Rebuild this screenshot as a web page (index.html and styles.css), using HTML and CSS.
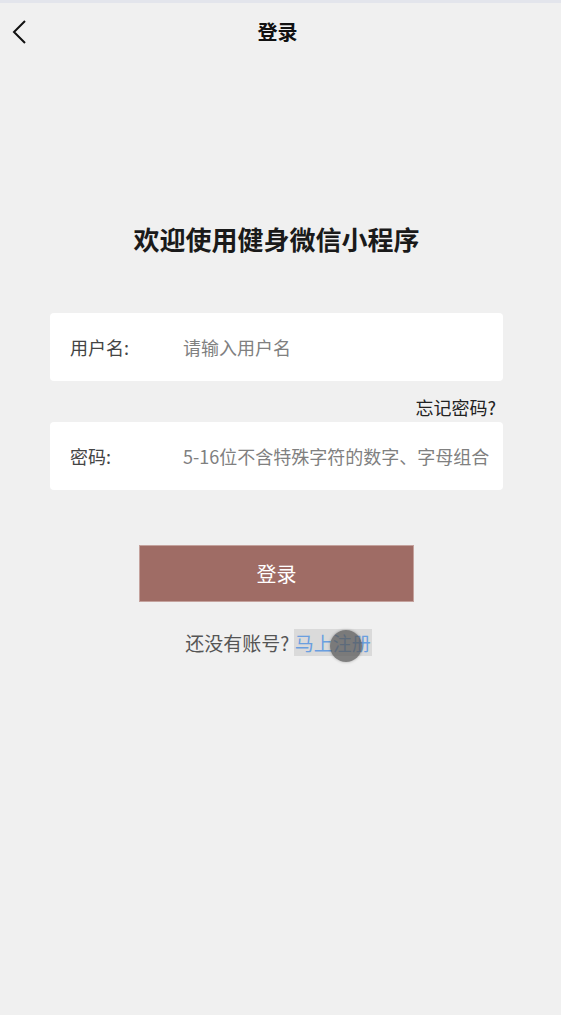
FILE: index.html
```html
<!DOCTYPE html>
<html lang="zh">
<head>
<meta charset="utf-8">
<title>登录</title>
<link rel="stylesheet" href="styles.css">
</head>
<body>
<div class="page">
  <div class="topline"></div>
  <header class="nav">
    <span class="back">
      <svg width="16" height="26" viewBox="0 0 16 26"><path d="M14 2 L3 13 L14 24" fill="none" stroke="#111" stroke-width="2"/></svg>
    </span>
    <span class="nav-title">登录</span>
  </header>
  <main class="content">
    <h1 class="welcome">欢迎使用健身微信小程序</h1>
    <div class="field">
      <span class="label">用户名:</span>
      <span class="placeholder">请输入用户名</span>
    </div>
    <div class="forgot">忘记密码?</div>
    <div class="field">
      <span class="label">密码:</span>
      <span class="placeholder">5-16位不含特殊字符的数字、字母组合</span>
    </div>
    <button class="login-btn">登录</button>
    <div class="register">还没有账号? <span class="reg-link">马上注册<span class="touch"></span></span></div>
  </main>
</div>
</body>
</html>
```
FILE: styles.css
```css
html, body {
  margin: 0;
  padding: 0;
  background: #f0f0f0;
}
body {
  font-family: "Noto Sans CJK SC", "Noto Sans", sans-serif;
  color: #222;
}
.page {
  width: 561px;
  min-height: 1015px;
  background: #f0f0f0;
}
.topline {
  height: 3px;
  background: #e3e5ec;
}
.nav {
  position: relative;
  width: 555px;
  height: 58px;
  display: flex;
  align-items: center;
  justify-content: center;
}
.back {
  position: absolute;
  left: 11px;
  top: 16px;
  display: flex;
}
.nav-title {
  font-size: 20px;
  font-weight: 700;
  color: #111;
  margin-top: -1px;
}
.content {
  width: 553px;
  display: flex;
  flex-direction: column;
  align-items: center;
  padding-top: 158px;
}
.welcome {
  margin: 0 0 54px 0;
  font-size: 26px;
  font-weight: 700;
  color: #1a1a1a;
  line-height: 40px;
}
.field {
  width: 453px;
  height: 68px;
  box-sizing: border-box;
  background: #fff;
  border-radius: 4px;
  display: flex;
  align-items: center;
  padding-left: 20px;
  font-size: 18px;
}
.label {
  width: 113px;
  color: #444;
}
.placeholder {
  color: #808080;
  white-space: nowrap;
}
.forgot {
  width: 453px;
  text-align: right;
  font-size: 18px;
  color: #222;
  line-height: 26px;
  margin: 13px 0 2px;
  padding-right: 7px;
  box-sizing: border-box;
}
.login-btn {
  margin-top: 55px;
  width: 275px;
  height: 57px;
  background: #9f6c65;
  border: 1px solid #c4a29d;
  color: #fff;
  font-family: inherit;
  font-size: 20px;
  padding: 0;
}
.register {
  margin-top: 27px;
  font-size: 19px;
  color: #555;
  line-height: 28px;
  padding-left: 4px;
}
.reg-link {
  position: relative;
  color: #6a9fe0;
  background: #dadada;
  padding: 0 1px;
}
.touch {
  position: absolute;
  left: 36px;
  top: 1px;
  width: 32px;
  height: 32px;
  border-radius: 50%;
  background: rgba(90, 90, 90, 0.75);
  box-shadow: 0 0 3px rgba(0,0,0,0.3);
}
```
